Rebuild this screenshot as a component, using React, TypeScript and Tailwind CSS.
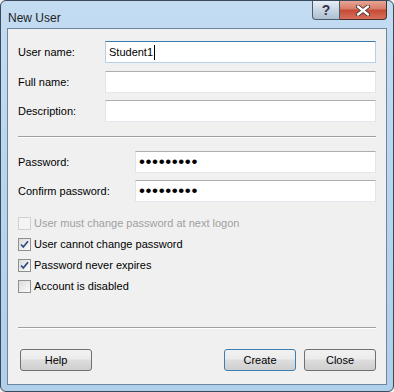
import React from 'react';

const font = { fontFamily: '"Liberation Sans", Arial, sans-serif' };

function Field({ value, focused, password }: { value?: string; focused?: boolean; password?: boolean }) {
  return (
    <div
      className={
        'h-[22px] flex-1 bg-white border flex items-center pl-[3px] ' +
        (focused
          ? 'border-[#b5cfe7] border-t-[#3d7bad]'
          : 'border-[#e2e3ea] border-t-[#abadb3] border-b-[#e3e9ef]')
      }
    >
      {password ? (
        <span className="text-[17px] leading-none tracking-[0.6px] text-black -mt-[1px]">•••••••••</span>
      ) : (
        <>
          <span className="text-[11px] text-black">{value}</span>
          {focused && <span className="w-[1px] h-[15px] bg-black ml-[1px]" />}
        </>
      )}
    </div>
  );
}

function Row({ label, labelWidth, children, className }: { label: string; labelWidth: string; children: React.ReactNode; className?: string }) {
  return (
    <div className={'flex items-center ' + (className || '')}>
      <div className={labelWidth + ' text-[11px] text-black'}>{label}</div>
      {children}
    </div>
  );
}

function Check({ label, checked, disabled }: { label: string; checked?: boolean; disabled?: boolean }) {
  return (
    <div className="h-[21px] flex items-center">
      <div
        className={
          'w-[13px] h-[13px] border flex items-center justify-center ' +
          (disabled
            ? 'border-[#d0d0d0] bg-[#f4f4f4]'
            : 'border-[#8e8f8f] bg-gradient-to-br from-[#dcdcdc] to-[#fbfbfb]')
        }
      >
        {checked && (
          <svg width="9" height="9" viewBox="0 0 9 9">
            <path d="M1 4.5 L3.3 7 L8 1.2" fill="none" stroke="#2c4a86" strokeWidth="1.7" />
          </svg>
        )}
      </div>
      <span className={'ml-[3px] text-[11px] ' + (disabled ? 'text-[#a0a0a0]' : 'text-black')}>{label}</span>
    </div>
  );
}

function Button({ label, primary }: { label: string; primary?: boolean }) {
  return (
    <div
      className={
        'w-[72px] h-[22px] rounded-[3px] border flex items-center justify-center text-[11px] text-black ' +
        (primary ? 'border-[#3c7fb1]' : 'border-[#707070]')
      }
      style={{ background: 'linear-gradient(#f2f2f2 0%, #ebebeb 45%, #dddddd 50%, #cfcfcf 100%)' }}
    >
      {label}
    </div>
  );
}

export default function App() {
  return (
    <div style={font} className="w-[394px] h-[392px] bg-[#f0f0f0]">
      <div className="w-[394px] h-[392px] rounded-[6px] border border-[#3b4a5a] bg-gradient-to-b from-[#c3dcf2] via-[#b8d5ee] to-[#b0cfea] flex flex-col">
        <div className="h-[27px] flex items-start pl-[7px] pr-[6px]">
          <div className="mt-[8px] text-[12px] text-[#1e1e1e]">New User</div>
          <div className="ml-auto flex">
            <div className="w-[28px] h-[19px] border border-t-0 border-[#4a5b6d] rounded-bl-[4px] bg-gradient-to-b from-[#e6eef6] via-[#c8d6e4] to-[#aebfd0] flex items-center justify-center text-[#334] text-[14px] font-bold">
              ?
            </div>
            <div className="w-[47px] h-[19px] border border-t-0 border-l-0 border-[#4a3028] rounded-br-[4px] flex items-center justify-center"
              style={{ background: 'linear-gradient(#e7a696 0%, #d77a66 45%, #c44b35 50%, #d66f5c 100%)' }}>
              <svg width="14" height="11" viewBox="0 0 14 11">
                <path d="M2 1.5 L12 9.5 M12 1.5 L2 9.5" stroke="#3a2a28" strokeWidth="4" strokeLinecap="round" />
                <path d="M2 1.5 L12 9.5 M12 1.5 L2 9.5" stroke="#ffffff" strokeWidth="2.4" strokeLinecap="round" />
              </svg>
            </div>
          </div>
        </div>
        <div className="mx-[6px] border border-[#6d86a0] bg-[#f0f0f0] h-[357px] px-[10px] pt-[12px] flex flex-col">
          <Row label="User name:" labelWidth="w-[87px]">
            <Field value="Student1" focused />
          </Row>
          <Row label="Full name:" labelWidth="w-[87px]" className="mt-[8px]">
            <Field />
          </Row>
          <Row label="Description:" labelWidth="w-[87px]" className="mt-[7px]">
            <Field />
          </Row>
          <div className="mt-[14px] border-t border-[#a0a0a0] border-b border-b-white" />
          <Row label="Password:" labelWidth="w-[117px]" className="mt-[13px]">
            <Field password />
          </Row>
          <Row label="Confirm password:" labelWidth="w-[117px]" className="mt-[7px]">
            <Field password />
          </Row>
          <div className="mt-[11px] flex flex-col">
            <Check label="User must change password at next logon" disabled />
            <Check label="User cannot change password" checked />
            <Check label="Password never expires" checked />
            <Check label="Account is disabled" />
          </div>
          <div className="mt-[30px] border-t border-[#a0a0a0] border-b border-b-white" />
          <div className="mt-[20px] flex pl-[2px]">
            <Button label="Help" />
            <div className="ml-auto flex gap-[8px]">
              <Button label="Create" primary />
              <Button label="Close" />
            </div>
          </div>
        </div>
      </div>
    </div>
  );
}
